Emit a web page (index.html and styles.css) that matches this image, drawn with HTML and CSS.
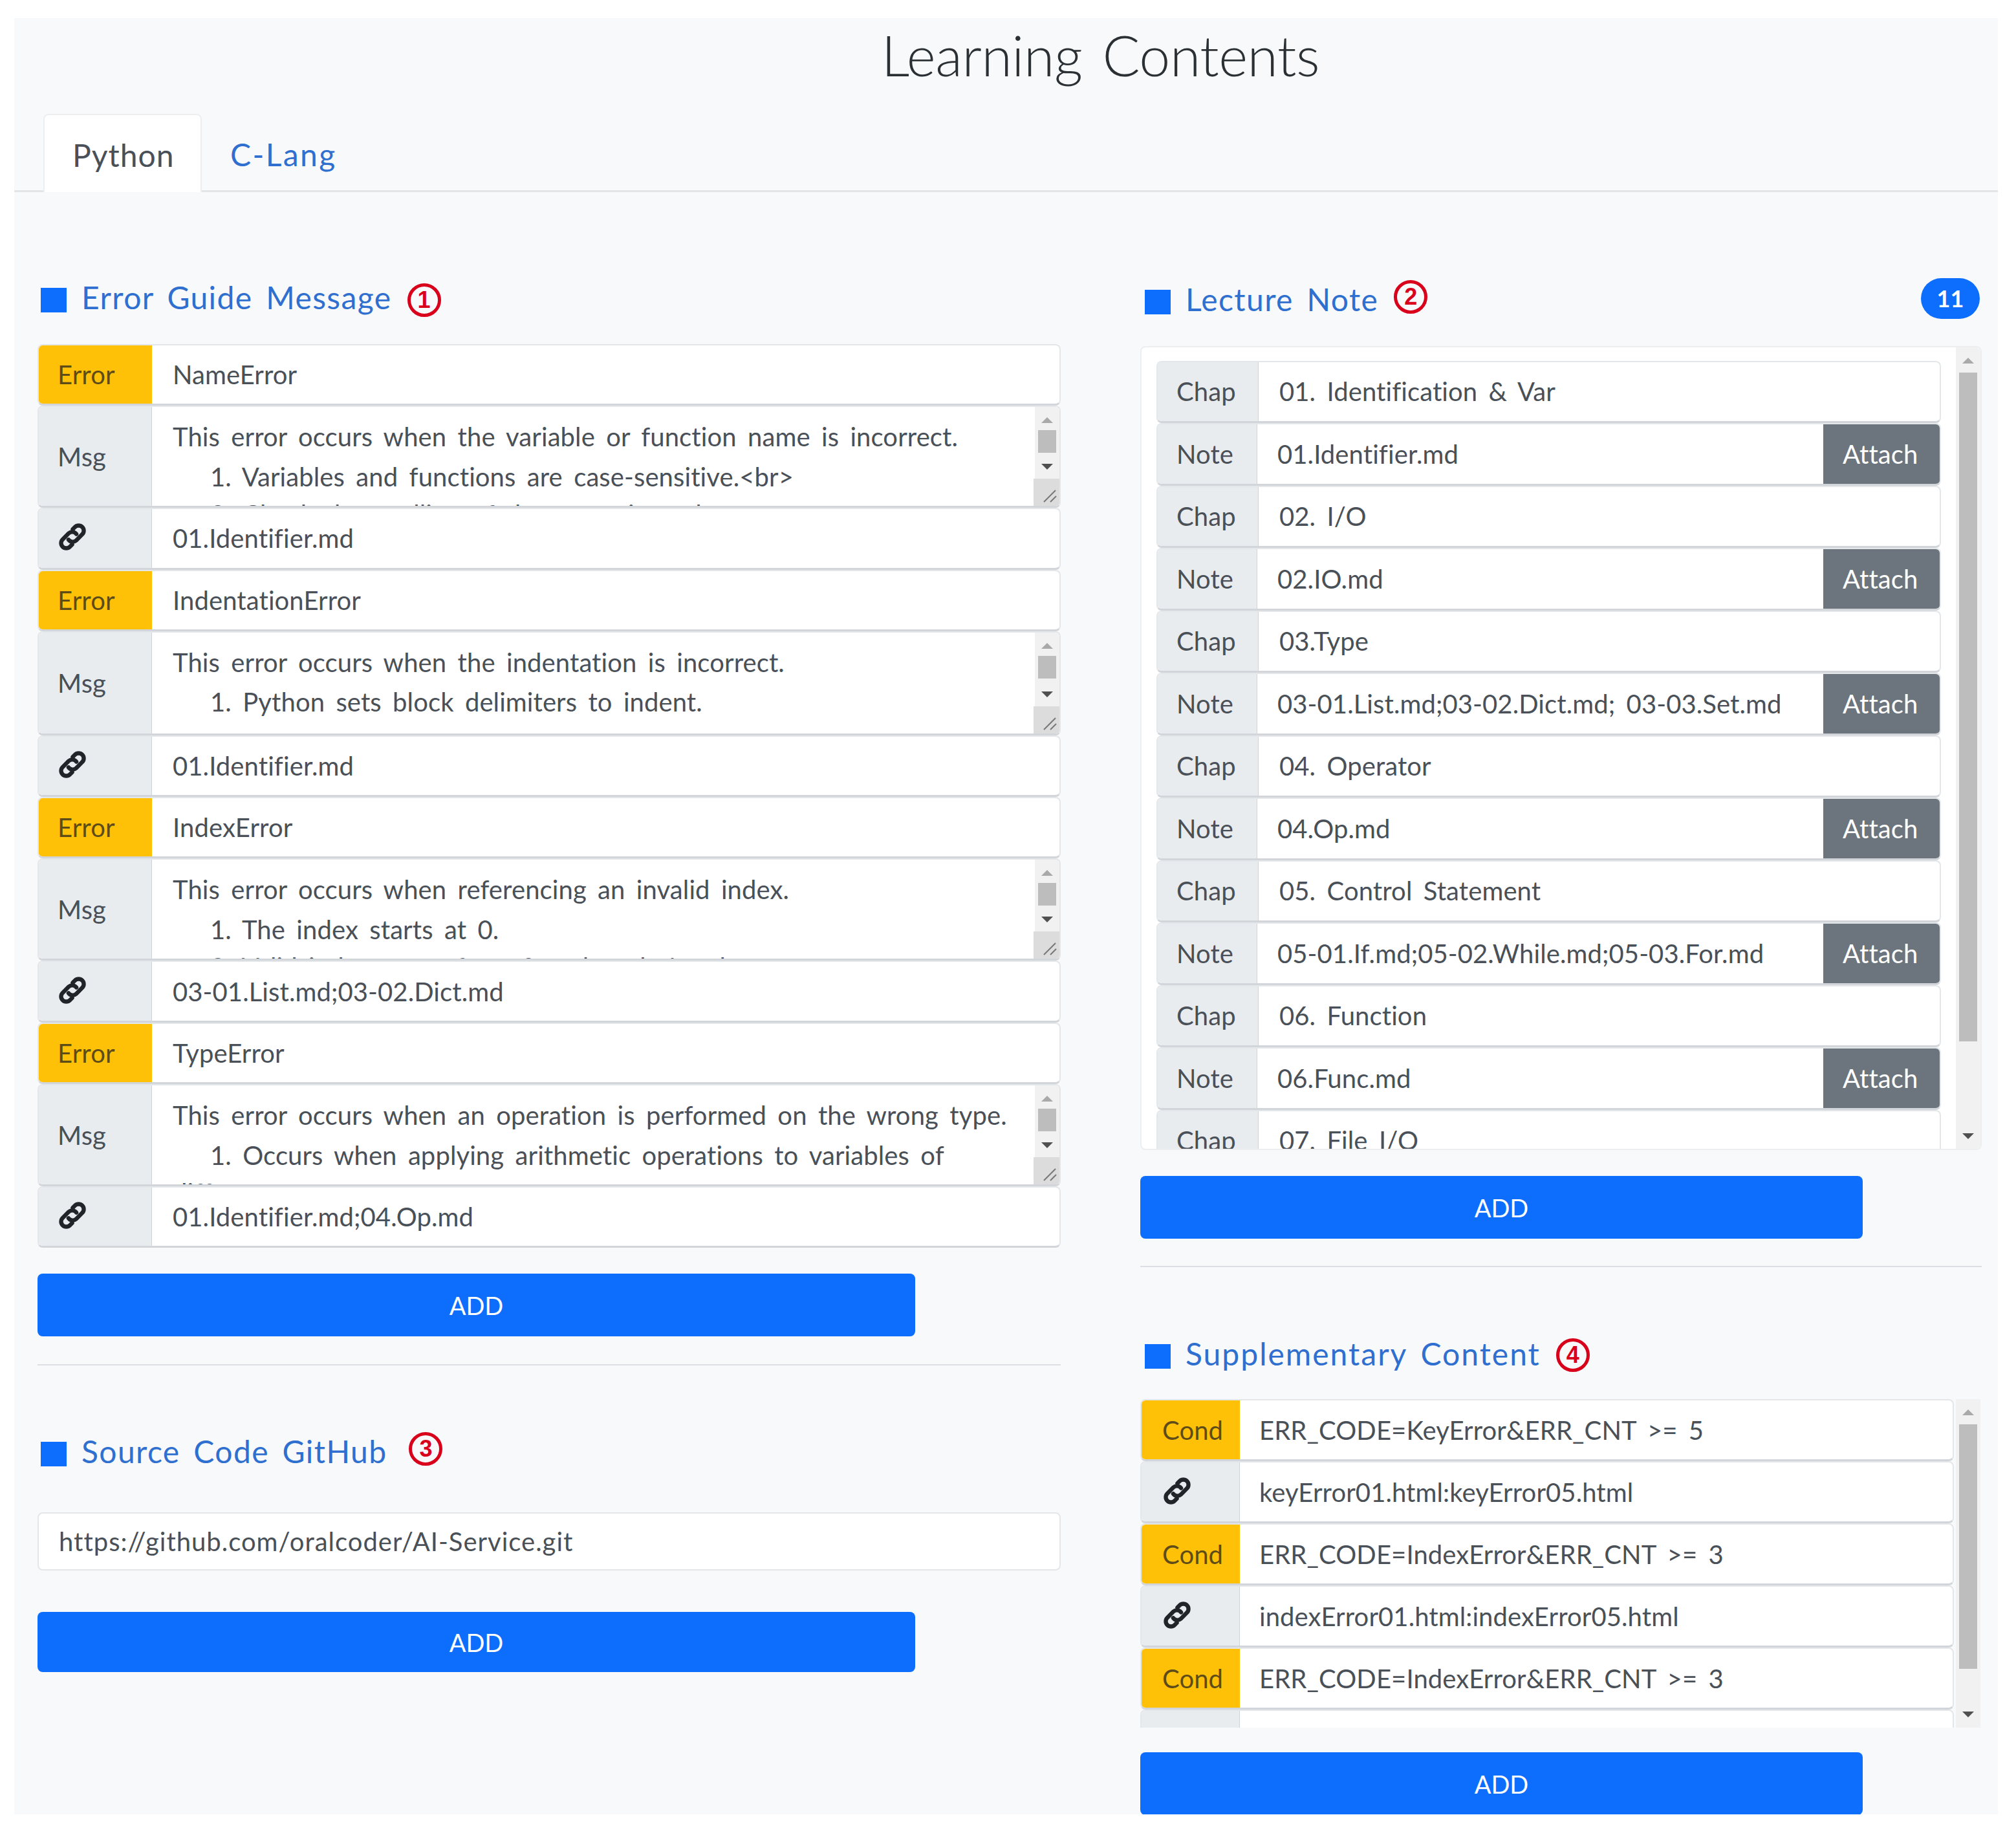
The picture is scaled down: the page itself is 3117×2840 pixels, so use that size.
FILE: index.html
```html
<!DOCTYPE html>
<html lang="en">
<head>
<meta charset="utf-8">
<title>Learning Contents</title>
<link rel="stylesheet" href="styles.css">
</head>
<body>
<svg class="defs" width="0" height="0" aria-hidden="true">
  <symbol id="link" viewBox="0 0 44 44">
    <g transform="translate(22 22) rotate(-45)" fill="none" stroke="currentColor" stroke-width="5.2" stroke-linecap="round">
      <path d="M6 1A6.5 6.5 0 0 0 0 -6.5H-11A6.5 6.5 0 0 0 -11 6.5H-7"/>
      <path d="M-6 -1A6.5 6.5 0 0 0 0 6.5H11A6.5 6.5 0 0 0 11 -6.5H7"/>
    </g>
  </symbol>
</svg>
<main class="panel">
  <h1 class="title">Learning Contents</h1>
  <nav class="tabs">
    <a class="tab active">Python</a>
    <a class="tab">C-Lang</a>
  </nav>
  <div class="cols">
    <section class="col-left">
      <div class="head head-err">
        <span class="sq"></span><span class="head-text">Error Guide Message</span><span class="num">1</span>
      </div>
      <div class="stack">
        <div class="row"><span class="lab warn">Error</span><span class="val">NameError</span></div>
        <div class="row msg">
          <span class="lab">Msg</span>
          <div class="msgtext"><div>This error occurs when the variable or function name is incorrect.</div><div class="ind">1. Variables and functions are case-sensitive.&lt;br&gt;</div><div class="ind clip">2. Check the spelling of the name in code.</div></div>
          <div class="tsb"><i class="up"></i><b class="thumb"></b><span class="fill"></span><i class="down"></i><span class="resize"><svg width="40" height="42" viewBox="0 0 40 42"><path d="M16 36L34 18M26 36L35 27" stroke="#777" stroke-width="2" fill="none"/></svg></span></div>
        </div>
        <div class="row"><span class="lab"><svg class="ic"><use href="#link"/></svg></span><span class="val">01.Identifier.md</span></div>

        <div class="row"><span class="lab warn">Error</span><span class="val">IndentationError</span></div>
        <div class="row msg tall">
          <span class="lab">Msg</span>
          <div class="msgtext"><div>This error occurs when the indentation is incorrect.</div><div class="ind">1. Python sets block delimiters to indent.</div></div>
          <div class="tsb"><i class="up"></i><b class="thumb"></b><span class="fill"></span><i class="down"></i><span class="resize"><svg width="40" height="42" viewBox="0 0 40 42"><path d="M16 36L34 18M26 36L35 27" stroke="#777" stroke-width="2" fill="none"/></svg></span></div>
        </div>
        <div class="row"><span class="lab"><svg class="ic"><use href="#link"/></svg></span><span class="val">01.Identifier.md</span></div>

        <div class="row"><span class="lab warn">Error</span><span class="val">IndexError</span></div>
        <div class="row msg">
          <span class="lab">Msg</span>
          <div class="msgtext"><div>This error occurs when referencing an invalid index.</div><div class="ind">1. The index starts at 0.</div><div class="ind clip">2. Valid indexes run from 0 to length-1 only.</div></div>
          <div class="tsb"><i class="up"></i><b class="thumb"></b><span class="fill"></span><i class="down"></i><span class="resize"><svg width="40" height="42" viewBox="0 0 40 42"><path d="M16 36L34 18M26 36L35 27" stroke="#777" stroke-width="2" fill="none"/></svg></span></div>
        </div>
        <div class="row"><span class="lab"><svg class="ic"><use href="#link"/></svg></span><span class="val">03-01.List.md;03-02.Dict.md</span></div>

        <div class="row"><span class="lab warn">Error</span><span class="val">TypeError</span></div>
        <div class="row msg">
          <span class="lab">Msg</span>
          <div class="msgtext"><div>This error occurs when an operation is performed on the wrong type.</div><div class="ind">1. Occurs when applying arithmetic operations to variables of</div><div class="clip">diff</div></div>
          <div class="tsb"><i class="up"></i><b class="thumb"></b><span class="fill"></span><i class="down"></i><span class="resize"><svg width="40" height="42" viewBox="0 0 40 42"><path d="M16 36L34 18M26 36L35 27" stroke="#777" stroke-width="2" fill="none"/></svg></span></div>
        </div>
        <div class="row"><span class="lab"><svg class="ic"><use href="#link"/></svg></span><span class="val">01.Identifier.md;04.Op.md</span></div>
      </div>
      <button class="add add-left">ADD</button>
      <hr class="rule rule-left">
      <div class="head head-src">
        <span class="sq"></span><span class="head-text">Source Code GitHub</span><span class="num num-src">3</span>
      </div>
      <div class="input">https://github.com/oralcoder/AI-Service.git</div>
      <button class="add add-src">ADD</button>
    </section>

    <section class="col-right">
      <div class="head head-note">
        <span class="sq"></span><span class="head-text">Lecture Note</span><span class="num num-note">2</span>
        <span class="badge">11</span>
      </div>
      <div class="notes">
        <div class="notes-body">
          <div class="row chap"><span class="lab">Chap</span><span class="val">01. Identification &amp; Var</span></div>
          <div class="row note"><span class="lab">Note</span><span class="val">01.Identifier.md</span><span class="attach">Attach</span></div>
          <div class="row chap"><span class="lab">Chap</span><span class="val">02. I/O</span></div>
          <div class="row note"><span class="lab">Note</span><span class="val">02.IO.md</span><span class="attach">Attach</span></div>
          <div class="row chap"><span class="lab">Chap</span><span class="val">03.Type</span></div>
          <div class="row note"><span class="lab">Note</span><span class="val">03-01.List.md;03-02.Dict.md; 03-03.Set.md</span><span class="attach">Attach</span></div>
          <div class="row chap"><span class="lab">Chap</span><span class="val">04. Operator</span></div>
          <div class="row note"><span class="lab">Note</span><span class="val">04.Op.md</span><span class="attach">Attach</span></div>
          <div class="row chap"><span class="lab">Chap</span><span class="val">05. Control Statement</span></div>
          <div class="row note"><span class="lab">Note</span><span class="val">05-01.If.md;05-02.While.md;05-03.For.md</span><span class="attach">Attach</span></div>
          <div class="row chap"><span class="lab">Chap</span><span class="val">06. Function</span></div>
          <div class="row note"><span class="lab">Note</span><span class="val">06.Func.md</span><span class="attach">Attach</span></div>
          <div class="row chap"><span class="lab">Chap</span><span class="val">07. File I/O</span></div>
        </div>
        <div class="sb sb-notes"><i class="up"></i><b class="thumb"></b><span class="fill"></span><i class="down"></i></div>
      </div>
      <button class="add add-right add-notes">ADD</button>
      <hr class="rule rule-right">
      <div class="head head-sup">
        <span class="sq"></span><span class="head-text">Supplementary Content</span><span class="num num-sup">4</span>
      </div>
      <div class="supp">
        <div class="supp-body">
          <div class="row srow"><span class="lab warn">Cond</span><span class="val">ERR_CODE=KeyError&amp;ERR_CNT &gt;= 5</span></div>
          <div class="row srow"><span class="lab"><svg class="ic"><use href="#link"/></svg></span><span class="val">keyError01.html:keyError05.html</span></div>
          <div class="row srow"><span class="lab warn">Cond</span><span class="val">ERR_CODE=IndexError&amp;ERR_CNT &gt;= 3</span></div>
          <div class="row srow"><span class="lab"><svg class="ic"><use href="#link"/></svg></span><span class="val">indexError01.html:indexError05.html</span></div>
          <div class="row srow"><span class="lab warn">Cond</span><span class="val">ERR_CODE=IndexError&amp;ERR_CNT &gt;= 3</span></div>
          <div class="row srow"><span class="lab"></span><span class="val"></span></div>
        </div>
        <div class="sb sb-supp"><i class="up"></i><b class="thumb"></b><span class="fill"></span><i class="down"></i></div>
      </div>
      <button class="add add-right add-last">ADD</button>
    </section>
  </div>
</main>
</body>
</html>
```

FILE: styles.css
```css
* { box-sizing: border-box; }
html, body { margin: 0; background: #fff; }
body { font-family: Lato, "Noto Sans", sans-serif; color: #495057; padding: 28px 28px 35px 22px; }
.defs { display: block; position: absolute; }
.panel { background: #f8f9fa; height: 2777px; overflow: hidden; padding: 0 0 0 36px; }

.title { margin: 0; height: 148px; padding: 10px 0 0 256px; text-align: center; font-size: 86px; line-height: 94px; font-weight: 300; color: #2b3035; letter-spacing: -0.4px; word-spacing: 8px; }

.tabs { display: flex; height: 121px; margin-left: -36px; padding-left: 45px; border-bottom: 3px solid #e3e6e9; }
.tab { height: 121px; padding: 4px 44px 0; display: flex; align-items: center; font-size: 48px; color: #2f6fd0; letter-spacing: 2.4px; }
.tab.active { width: 245px; padding: 4px 0 0 43px; background: #fff; color: #495057; border: 2px solid #eceef0; border-bottom: 0; border-radius: 8px 8px 0 0; letter-spacing: 1px; }

.cols { display: grid; grid-template-columns: 1582px 1301px; column-gap: 123px; padding-top: 129px; }
.col-right { padding-top: 3px; }

.head { display: flex; align-items: center; height: 76px; padding-left: 5px; }
.head-err { margin-bottom: 30px; }
.head-src { margin-top: 99px; margin-bottom: 52px; }
.head-note { margin-bottom: 30px; padding-left: 7px; }
.head-sup { margin-top: 100px; margin-bottom: 28px; padding-left: 7px; }
.sq { width: 40px; height: 38px; background: #0d6efd; flex: none; margin-right: 23px; }
.head-text { font-size: 48px; color: #2f6fd0; letter-spacing: 1.4px; word-spacing: 7px; padding-bottom: 9px; }
.head-sup .head-text { letter-spacing: 2px; }
.num { flex: none; width: 52px; height: 52px; margin-left: 24px; border: 5px solid #d9001b; border-radius: 50%; color: #d9001b; font-family: "Liberation Sans", sans-serif; font-weight: 700; font-size: 36px; line-height: 41px; text-align: center; }
.num-src { margin-left: 34px; margin-bottom: 16px; }
.num-note { margin-bottom: 16px; }
.num-sup { margin-bottom: 4px; }
.badge { margin: -12px 3px 0 auto; width: 91px; height: 63px; border-radius: 32px; background: #0d6efd; color: #fff; font-size: 36px; font-weight: 700; line-height: 63px; text-align: center; }

.row { display: flex; height: 95.3px; background: #fff; border: 2px solid #e4e7ea; border-bottom: 3px solid #d2d5d9; border-radius: 8px; overflow: hidden; font-size: 40px; letter-spacing: 0.1px; word-spacing: 7px; }
.lab { flex: none; width: 175px; padding-left: 29px; display: flex; align-items: center; background: #e9ecef; border-right: 1px solid #ced4da; color: #495057; }
.lab.warn { background: #ffc107; color: #5d4c17; border-right: 0; }
.val { flex: 1; padding-left: 32px; display: flex; align-items: center; white-space: pre; }
.ic { width: 54px; height: 54px; color: #212529; margin: 0 0 4px -4px; flex: none; }

.msg { height: 158px; }
.msg.tall { height: 161px; }
.msgtext { flex: 1; padding: 16px 0 0 32px; line-height: 61.5px; white-space: nowrap; overflow: hidden; }
.ind { padding-left: 58px; }
.clip { margin-top: -3px; }

.tsb, .sb { flex: none; width: 38px; display: flex; flex-direction: column; align-items: center; background: #f1f1f1; }
.up, .down { display: block; flex: none; width: 0; height: 0; border-left: 9px solid transparent; border-right: 9px solid transparent; }
.up { border-bottom: 9px solid #a9a9a9; margin: 16px 0 11px; }
.down { border-top: 9px solid #505050; margin: 11px 0 14px; }
.thumb { display: block; flex: none; width: 28px; background: #bdbdbd; }
.fill { flex: 1; }
.tsb .thumb { height: 35px; }
.resize { flex: none; width: 40px; height: 42px; background: #dcdcdc; margin-left: -2px; }
.resize svg { display: block; }

.add { display: block; padding: 0; border: 0; border-radius: 8px; background: #0d6efd; color: #fff; font: 400 38px Lato, "Noto Sans", sans-serif; text-align: center; }
.add-left { width: 1357px; height: 97px; margin-top: 40px; }
.add-src { width: 1357px; height: 93px; margin-top: 64px; }
.add-right { width: 1117px; height: 97px; margin-top: 42px; }
.add-notes { margin-top: 40px; }
.add-last { margin-top: 38px; }
.rule { height: 2px; margin: 0; border: 0; background: #dcdfe3; }
.rule-left { margin-top: 43px; }
.rule-right { margin-top: 42px; }

.input { height: 90px; padding-left: 31px; display: flex; align-items: center; background: #fff; border: 2px solid #e4e7ea; border-radius: 8px; font-size: 40px; letter-spacing: 1px; }

.notes { display: flex; height: 1243px; background: #fff; border: 2px solid #eceef0; border-radius: 8px; overflow: hidden; }
.notes-body { flex: 1; padding: 21px 23px 0 23px; overflow: hidden; }
.row.chap { height: 95.5px; }
.row.note { height: 97.5px; }
.chap .lab { width: 156px; padding-left: 29px; }
.chap .val { padding-left: 32px; }
.note .lab { width: 154px; padding-left: 29px; }
.note .val { padding-left: 31px; }
.attach { flex: none; width: 180px; padding-left: 30px; display: flex; align-items: center; background: #6c757d; color: #fff; }
.sb-notes .thumb { height: 1034px; }
.sb-notes .up { margin-bottom: 14px; }
.sb-notes .down { margin-bottom: 15px; }

.supp { display: flex; height: 508px; overflow: hidden; }
.supp-body { width: 1258px; overflow: hidden; }
.row.srow { height: 96px; }
.srow .lab { width: 152px; padding-left: 32px; }
.srow .val { padding-left: 30px; }
.sb-supp { margin-left: 3px; }
.sb-supp .up { margin-bottom: 14px; }
.sb-supp .thumb { height: 378px; }
.sb-supp .down { margin-bottom: 16px; }
```
